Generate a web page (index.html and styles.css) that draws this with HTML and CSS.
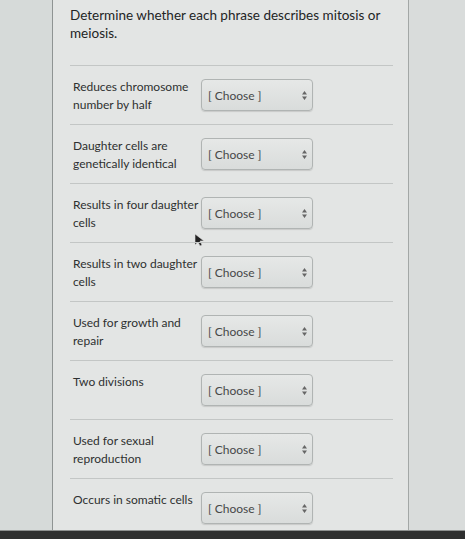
FILE: index.html
```html
<!DOCTYPE html>
<html>
<head>
<meta charset="utf-8">
<link rel="stylesheet" href="styles.css">
</head>
<body>
<div class="screen">
  <div class="gutter"></div>
  <div class="panel">
    <p class="title">Determine whether each phrase describes mitosis or meiosis.</p>
    <div class="rows">
      <div class="row"><div class="label">Reduces chromosome number by half</div><div class="select"><span>[ Choose ]</span><svg class="arr" width="5" height="9" viewBox="0 0 5 9"><path d="M2.5 0L5 3.5H0Z M2.5 9L0 5.5H5Z"/></svg></div></div>
      <div class="row"><div class="label">Daughter cells are genetically identical</div><div class="select"><span>[ Choose ]</span><svg class="arr" width="5" height="9" viewBox="0 0 5 9"><path d="M2.5 0L5 3.5H0Z M2.5 9L0 5.5H5Z"/></svg></div></div>
      <div class="row"><div class="label">Results in four daughter cells</div><div class="select"><span>[ Choose ]</span><svg class="arr" width="5" height="9" viewBox="0 0 5 9"><path d="M2.5 0L5 3.5H0Z M2.5 9L0 5.5H5Z"/></svg></div><svg class="cursor" width="10" height="14" viewBox="0 0 10 14"><path d="M1 1L1 12L4 9L6 13L8 12L6 8L10 8Z" fill="#222" stroke="#ddd" stroke-width="0.6"/></svg></div>
      <div class="row"><div class="label">Results in two daughter cells</div><div class="select"><span>[ Choose ]</span><svg class="arr" width="5" height="9" viewBox="0 0 5 9"><path d="M2.5 0L5 3.5H0Z M2.5 9L0 5.5H5Z"/></svg></div></div>
      <div class="row"><div class="label">Used for growth and repair</div><div class="select"><span>[ Choose ]</span><svg class="arr" width="5" height="9" viewBox="0 0 5 9"><path d="M2.5 0L5 3.5H0Z M2.5 9L0 5.5H5Z"/></svg></div></div>
      <div class="row"><div class="label">Two divisions</div><div class="select"><span>[ Choose ]</span><svg class="arr" width="5" height="9" viewBox="0 0 5 9"><path d="M2.5 0L5 3.5H0Z M2.5 9L0 5.5H5Z"/></svg></div></div>
      <div class="row"><div class="label">Used for sexual reproduction</div><div class="select"><span>[ Choose ]</span><svg class="arr" width="5" height="9" viewBox="0 0 5 9"><path d="M2.5 0L5 3.5H0Z M2.5 9L0 5.5H5Z"/></svg></div></div>
      <div class="row"><div class="label">Occurs in somatic cells</div><div class="select"><span>[ Choose ]</span><svg class="arr" width="5" height="9" viewBox="0 0 5 9"><path d="M2.5 0L5 3.5H0Z M2.5 9L0 5.5H5Z"/></svg></div></div>
    </div>
  </div>
  <div class="gutter-right"></div>
</div>
<div class="bar"></div>
</body>
</html>
```
FILE: styles.css
```css
html, body {
  margin: 0;
  padding: 0;
  height: 539px;
  overflow: hidden;
  background: #d8dbda;
  font-family: Lato, "Open Sans", sans-serif;
}
.screen {
  display: flex;
  height: 530px;
  overflow: hidden;
}
.gutter {
  width: 52px;
  flex: none;
  background: #d6dad9;
}
.panel {
  width: 357px;
  flex: none;
  background: #e3e5e4;
  border-left: 1px solid #8f9493;
  border-right: 1px solid #a3a7a6;
  padding-left: 17px;
  box-sizing: border-box;
}
.gutter-right {
  flex: 1;
  background: #d9dcdb;
}
.title {
  margin: 6px 0 0 0;
  width: 320px;
  font-size: 13.5px;
  line-height: 18px;
  color: #222424;
}
.rows {
  margin-top: 23px;
  width: 323px;
}
.row {
  position: relative;
  display: flex;
  align-items: flex-start;
  border-top: 1px solid #c3c6c5;
  padding: 12px 0 13px 3px;
  height: 33px;
}
.label {
  width: 128px;
  flex: none;
  font-size: 12px;
  line-height: 18px;
  color: #2e3030;
}
.select {
  margin-top: 1px;
  width: 112px;
  height: 32px;
  box-sizing: border-box;
  border: 1px solid #b0b4b3;
  border-radius: 4px;
  background: linear-gradient(#e6e8e7, #d9dcdb);
  box-shadow: 0 1px 1px rgba(0,0,0,0.12);
  display: flex;
  align-items: center;
  justify-content: space-between;
  padding: 0 5px 0 6px;
  font-size: 12px;
  color: #464848;
}
.arr path {
  fill: #666;
}
.cursor {
  position: absolute;
  left: 124px;
  top: 49px;
}
.bar {
  height: 9px;
  background: #2e2f2f;
  border-top: 1px solid #8c8f8e;
}
```
